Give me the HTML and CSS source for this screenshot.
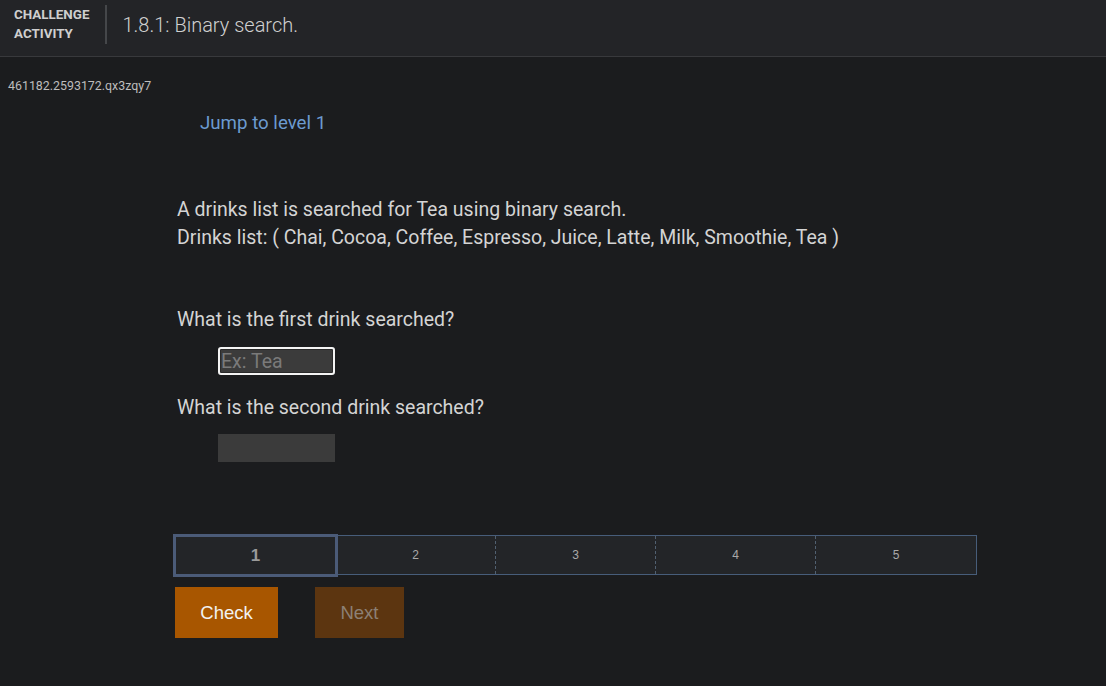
FILE: index.html
```
<!DOCTYPE html>
<html>
<head>
<meta charset="utf-8">
<link rel="stylesheet" href="styles.css">
</head>
<body>
<header class="topbar">
  <div class="kind">CHALLENGE<br>ACTIVITY</div>
  <div class="title">1.8.1: Binary search.</div>
</header>
<div class="code">461182.2593172.qx3zqy7</div>
<main class="activity">
  <a class="jump">Jump to level 1</a>
  <div class="prompt">
    <p>A drinks list is searched for Tea using binary search.<br>Drinks list: ( Chai, Cocoa, Coffee, Espresso, Juice, Latte, Milk, Smoothie, Tea )</p>
  </div>
  <div class="question">What is the first drink searched?</div>
  <div class="answer"><input class="field focused" type="text" placeholder="Ex: Tea"></div>
  <div class="question second">What is the second drink searched?</div>
  <div class="answer lower"><input class="field" type="text"></div>
  <div class="levels">
    <div class="level current">1</div>
    <div class="level">2</div>
    <div class="level">3</div>
    <div class="level">4</div>
    <div class="level last">5</div>
  </div>
  <div class="actions">
    <button class="btn check">Check</button>
    <button class="btn next">Next</button>
  </div>
</main>
</body>
</html>
```
FILE: styles.css
```
html, body {
  margin: 0;
  padding: 0;
  background: #1b1c1e;
  height: 100%;
  overflow: hidden;
}
body {
  font-family: Roboto, "Liberation Sans", sans-serif;
  color: #d2d2d2;
}
.topbar {
  height: 56px;
  background: #232427;
  border-bottom: 1px solid #38393c;
  display: flex;
  align-items: center;
}
.kind {
  font-weight: 700;
  font-size: 13.4px;
  line-height: 19px;
  color: #cfcfcf;
  padding: 0 16px 0 14px;
  height: 39px;
  display: flex;
  align-items: center;
  border-right: 2px solid #45474a;
  margin-top: -8px;
}
.title {
  font-size: 20px;
  font-weight: 300;
  color: #d0d0d0;
  margin-left: 15px;
  margin-top: -7px;
}
.code {
  font-size: 12.4px;
  color: #bdbdbd;
  margin: 22px 0 0 8px;
  line-height: 14px;
}
.activity {
  margin-left: 177px;
  width: 800px;
}
.jump {
  display: block;
  margin: 18px 0 0 23px;
  font-size: 18.7px;
  color: #6c9bd0;
  line-height: 24px;
}
.prompt p {
  margin: 61px 0 0 0;
  font-size: 19.5px;
  line-height: 28px;
  color: #d4d4d4;
}
.question {
  font-size: 19.5px;
  line-height: 28px;
  color: #d4d4d4;
  margin-top: 54px;
}
.question.second {
  margin-top: 19px;
}
.answer {
  padding-left: 41px;
  margin-top: 13px;
}
.answer.lower {
  margin-top: 12px;
}
.field {
  display: block;
  box-sizing: border-box;
  width: 117px;
  height: 28px;
  background: #3b3b3b;
  border: none;
  border-radius: 0;
  padding: 0 1px;
  font-family: Roboto, "Liberation Sans", sans-serif;
  font-size: 19.5px;
  color: #ddd;
  outline: none;
}
.field.focused {
  border: 2px solid #f4f4f4;
  border-radius: 3px;
  box-shadow: inset 0 0 0 1px #2a2a2a;
}
.field::placeholder {
  color: #7a7a7a;
}
.levels {
  display: grid;
  grid-template-columns: repeat(5, 1fr);
  width: 802px;
  height: 40px;
  margin: 73px 0 0 -2px;
  border: 1px solid #475d7a;
  background: #232528;
  box-sizing: border-box;
}
.level {
  display: flex;
  align-items: center;
  justify-content: center;
  font-family: "Liberation Sans", Arial, sans-serif;
  font-size: 12px;
  color: #a9a9a9;
  border-right: 1px dashed #516070;
}
.level.last {
  border-right: none;
}
.level.current {
  position: relative;
  margin: -2px -2px -3px -3px;
  border: 3px solid #4b5b78;
  font-size: 17px;
  font-weight: 700;
  color: #9a9a9a;
}
.actions {
  display: flex;
  gap: 37px;
  margin: 12px 0 0 -2px;
}
.btn {
  height: 51px;
  border: none;
  font-family: "Liberation Sans", Arial, sans-serif;
  font-size: 18.5px;
  padding: 0;
}
.check {
  width: 103px;
  background: #a85600;
  color: #f2f2f2;
}
.next {
  width: 89px;
  background: #5c3510;
  color: #8c8075;
}
```
